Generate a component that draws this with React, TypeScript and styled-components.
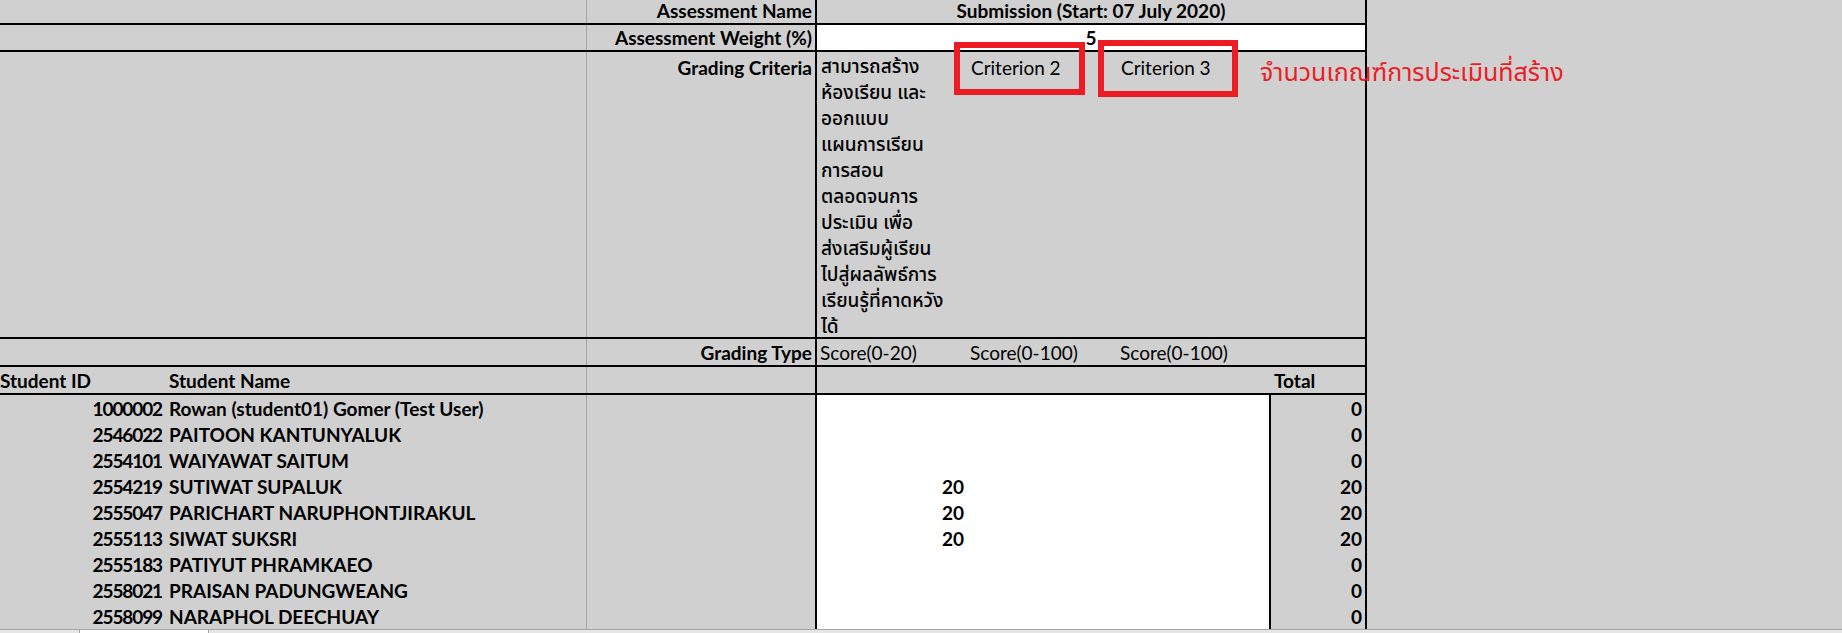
import React from "react";
import styled, { createGlobalStyle } from "styled-components";

const Global = createGlobalStyle`
  html, body {
    margin: 0;
    padding: 0;
    width: 1842px;
    height: 633px;
    overflow: hidden;
    background: #d0d0d0;
  }
  #root { width: 1842px; height: 633px; }
`;

const LATIN = `"Lato", "Liberation Sans", "Noto Sans Thai", "Noto Sans", sans-serif`;
const THAI = `"Noto Sans Thai", "Noto Sans Thai UI", "Leelawadee UI", Tahoma, "Loma", "Garuda", "Noto Sans", sans-serif`;

const Page = styled.div`
  position: relative;
  width: 1842px;
  height: 633px;
  display: flex;
  flex-direction: column;
  font-family: ${LATIN};
  font-size: 19px;
  color: #000;
  background: #d0d0d0;
`;

const Sheet = styled.div`
  flex: none;
  display: grid;
  grid-template-columns: 166px 420px 1px 228px 2px 150px 150px 152px 2px 94px 2px 1fr;
  grid-template-rows: 23px 2px 25px 2px 285px 2px 26px 2px 26px 2px repeat(9, 26px);
  background: #d0d0d0;
`;

type Align = "left" | "right" | "center";

const Cell = styled.div<{ $col: string; $row: string | number; $align?: Align; $bold?: boolean; $flush?: boolean }>`
  grid-column: ${(p) => p.$col};
  grid-row: ${(p) => p.$row};
  display: flex;
  align-items: flex-end;
  justify-content: ${(p) => (p.$align === "right" ? "flex-end" : p.$align === "center" ? "center" : "flex-start")};
  padding: 0 ${(p) => (p.$flush ? "0" : "3px")};
  line-height: 24px;
  font-weight: ${(p) => (p.$bold ? 700 : 400)};
  white-space: nowrap;
  min-width: 0;
  z-index: 2;
`;

const NumCell = styled(Cell)`
  letter-spacing: -1.1px;
  padding-right: 4px;
`;

const TopCell = styled(Cell)`
  align-items: flex-start;
  padding-top: 3px;
  padding-left: 4px;
  line-height: 26px;
`;

const Fill = styled.div<{ $col: string; $row: string | number }>`
  grid-column: ${(p) => p.$col};
  grid-row: ${(p) => p.$row};
  background: #ffffff;
  z-index: 1;
`;

const HLine = styled.div<{ $row: number }>`
  grid-column: 1 / 12;
  grid-row: ${(p) => p.$row};
  background: #000;
  z-index: 3;
`;

const VLine = styled.div<{ $col: number; $row: string; $light?: boolean }>`
  grid-column: ${(p) => p.$col};
  grid-row: ${(p) => p.$row};
  background: ${(p) => (p.$light ? "#a6a6a6" : "#000")};
  z-index: ${(p) => (p.$light ? 1 : 3)};
`;

const ThaiLines = styled.div`
  display: flex;
  flex-direction: column;
  font-family: ${THAI};
  font-size: 19px;
  font-weight: 500;
  line-height: 26px;
  span { white-space: nowrap; }
`;

const RedBox = styled.div<{ $x: number; $y: number; $w: number; $h: number }>`
  position: absolute;
  left: ${(p) => p.$x}px;
  top: ${(p) => p.$y}px;
  width: ${(p) => p.$w}px;
  height: ${(p) => p.$h}px;
  box-sizing: border-box;
  border: 6px solid #ed1c24;
  z-index: 5;
`;

const RedNote = styled.div`
  position: absolute;
  left: 1260px;
  top: 56px;
  font-family: ${THAI};
  font-size: 25px;
  line-height: 34px;
  color: #ed1c24;
  white-space: nowrap;
  z-index: 5;
`;

const TabBar = styled.div`
  flex: 1;
  display: flex;
  padding-left: 79px;
  background: #e6e6e6;
  border-top: 1px solid #a6a6a6;
`;

const Tab = styled.div`
  width: 128px;
  background: #ffffff;
  border-left: 1px solid #a6a6a6;
  border-right: 1px solid #a6a6a6;
`;

const criteriaLines = [
  "สามารถสร้าง",
  "ห้องเรียน และ",
  "ออกแบบ",
  "แผนการเรียน",
  "การสอน",
  "ตลอดจนการ",
  "ประเมิน เพื่อ",
  "ส่งเสริมผู้เรียน",
  "ไปสู่ผลลัพธ์การ",
  "เรียนรู้ที่คาดหวัง",
  "ได้",
];

const students: { id: string; name: string; score?: number }[] = [
  { id: "1000002", name: "Rowan (student01) Gomer (Test User)" },
  { id: "2546022", name: "PAITOON KANTUNYALUK" },
  { id: "2554101", name: "WAIYAWAT SAITUM" },
  { id: "2554219", name: "SUTIWAT SUPALUK", score: 20 },
  { id: "2555047", name: "PARICHART NARUPHONTJIRAKUL", score: 20 },
  { id: "2555113", name: "SIWAT SUKSRI", score: 20 },
  { id: "2555183", name: "PATIYUT PHRAMKAEO" },
  { id: "2558021", name: "PRAISAN PADUNGWEANG" },
  { id: "2558099", name: "NARAPHOL DEECHUAY" },
];

export default function App() {
  return (
    <>
      <Global />
      <Page>
        <Sheet>
          <Fill $col="6 / 11" $row={3} />
          <Fill $col="6 / 9" $row="11 / 20" />

          <VLine $col={3} $row="1 / 20" $light />
          <VLine $col={5} $row="1 / 20" />
          <VLine $col={9} $row="11 / 20" />
          <VLine $col={11} $row="1 / 20" />
          <HLine $row={2} />
          <HLine $row={4} />
          <HLine $row={6} />
          <HLine $row={8} />
          <HLine $row={10} />

          <Cell $col="4" $row={1} $align="right" $bold>Assessment Name</Cell>
          <Cell $col="6 / 11" $row={1} $align="center" $bold>Submission (Start: 07 July 2020)</Cell>

          <Cell $col="4" $row={3} $align="right" $bold>Assessment Weight (%)</Cell>
          <Cell $col="6 / 11" $row={3} $align="center" $bold>5</Cell>

          <TopCell $col="4" $row={5} $align="right" $bold>Grading Criteria</TopCell>
          <TopCell $col="6" $row={5}>
            <ThaiLines>
              {criteriaLines.map((l) => (
                <span key={l}>{l}</span>
              ))}
            </ThaiLines>
          </TopCell>
          <TopCell $col="7" $row={5}>Criterion 2</TopCell>
          <TopCell $col="8" $row={5}>Criterion 3</TopCell>

          <Cell $col="4" $row={7} $align="right" $bold>Grading Type</Cell>
          <Cell $col="6" $row={7}>Score(0-20)</Cell>
          <Cell $col="7" $row={7}>Score(0-100)</Cell>
          <Cell $col="8" $row={7}>Score(0-100)</Cell>

          <Cell $col="1" $row={9} $bold $flush>Student ID</Cell>
          <Cell $col="2" $row={9} $bold>Student Name</Cell>
          <Cell $col="10" $row={9} $bold>Total</Cell>

          {students.map((s, i) => {
            const r = 11 + i;
            return (
              <React.Fragment key={s.id}>
                <NumCell $col="1" $row={r} $align="right" $bold>{s.id}</NumCell>
                <Cell $col="2" $row={r} $bold>{s.name}</Cell>
                {s.score !== undefined && (
                  <Cell $col="6" $row={r} $align="right" $bold>{s.score}</Cell>
                )}
                <Cell $col="10" $row={r} $align="right" $bold>{s.score ?? 0}</Cell>
              </React.Fragment>
            );
          })}
        </Sheet>
        <TabBar>
          <Tab />
        </TabBar>

        <RedBox $x={954} $y={42} $w={131} $h={53} />
        <RedBox $x={1098} $y={40} $w={140} $h={57} />
        <RedNote>จำนวนเกณฑ์การประเมินที่สร้าง</RedNote>
      </Page>
    </>
  );
}
